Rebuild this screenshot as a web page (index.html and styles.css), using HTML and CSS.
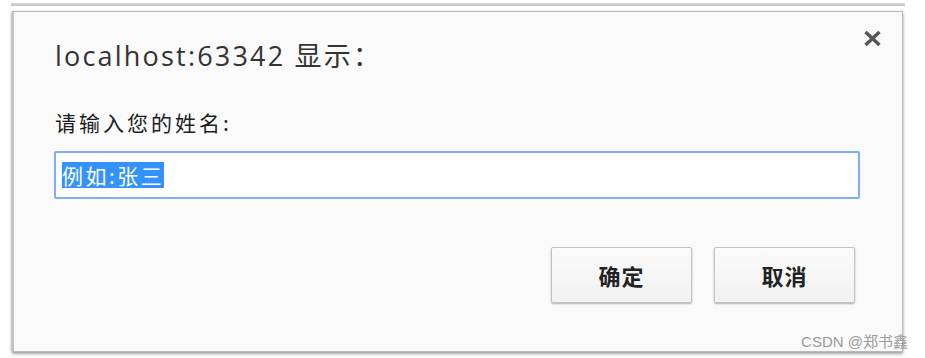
FILE: index.html
```html
<!DOCTYPE html>
<html lang="zh-CN">
<head>
<meta charset="utf-8">
<title>localhost:63342 显示</title>
<link rel="stylesheet" href="styles.css">
</head>
<body>
<div class="topbar"></div>
<div class="dialog">
  <div class="header">
    <div class="title">localhost:63342 显示：</div>
    <button class="close" aria-label="关闭">
      <svg width="19" height="17" viewBox="0 0 19 17"><path d="M2.5 2 L16.5 15 M16.5 2 L2.5 15" stroke="#555" stroke-width="3.4" stroke-linecap="butt" fill="none"/></svg>
    </button>
  </div>
  <div class="label">请输入您的姓名:</div>
  <div class="field"><span class="sel">例如:张三</span></div>
  <div class="actions">
    <button class="btn">确定</button>
    <button class="btn">取消</button>
  </div>
</div>
<div class="watermark">CSDN @郑书鑫</div>
</body>
</html>
```
FILE: styles.css
```css
html, body {
  margin: 0;
  padding: 0;
  background: #ffffff;
}
body {
  width: 925px;
  height: 358px;
  overflow: hidden;
  position: relative;
  font-family: "Open Sans", "Noto Sans CJK SC", sans-serif;
}
.topbar {
  margin: 3px 0 0 11px;
  width: 894px;
  height: 3px;
  background: linear-gradient(#d6d6d6, #c4c4c4);
}
.dialog {
  box-sizing: border-box;
  margin: 5px 0 0 12px;
  width: 891px;
  height: 341px;
  background: #fafafa;
  border: 1px solid #b9b9b9;
  border-left: 2px solid #c2c2c2;
  box-shadow: 0 2px 3px rgba(0,0,0,0.35), -1px 0 2px rgba(0,0,0,0.12);
  padding: 18px 20px 0 41px;
  display: flex;
  flex-direction: column;
}
.header {
  display: flex;
  justify-content: space-between;
  align-items: flex-start;
}
.title {
  margin-top: 7px;
  font-family: "Open Sans", "Noto Sans CJK TC", sans-serif;
  font-size: 27px;
  letter-spacing: 2.2px;
  color: #333;
  line-height: 37px;
}
.close {
  border: 0;
  background: none;
  padding: 0;
  margin: 0;
  width: 19px;
  height: 17px;
  display: flex;
}
.label {
  margin-top: 33px;
  font-family: "Noto Sans CJK SC", sans-serif;
  font-size: 21px;
  letter-spacing: 3px;
  line-height: 30px;
  color: #1e1e1e;
}
.field {
  box-sizing: border-box;
  margin-top: 14px;
  width: 806px;
  height: 48px;
  margin-left: -1px;
  border: 2px solid #82acf5;
  border-radius: 2px;
  background: #fff;
  padding: 0 6px;
  display: flex;
  align-items: center;
}
.sel {
  background: #3492ff;
  color: #fff;
  font-family: "Noto Sans CJK SC", sans-serif;
  font-size: 21px;
  letter-spacing: 2.5px;
  line-height: 26px;
  height: 26px;
}
.actions {
  margin-top: 48px;
  margin-right: 27px;
  display: flex;
  justify-content: flex-end;
  gap: 22px;
}
.btn {
  box-sizing: border-box;
  width: 141px;
  height: 56px;
  border: 1px solid #c3c3c3;
  border-radius: 2px;
  background: linear-gradient(#fbfbfb, #f1f1f1);
  box-shadow: 0 1px 2px rgba(0,0,0,0.3);
  font-family: "Noto Sans CJK SC", sans-serif;
  font-weight: 700;
  font-size: 22px;
  letter-spacing: 1px;
  color: #222;
  padding: 0;
}
.watermark {
  position: absolute;
  right: 17px;
  top: 332px;
  font-family: "Liberation Sans", "Noto Sans CJK SC", sans-serif;
  font-size: 15px;
  color: #9a9a9a;
  line-height: 20px;
}
```
